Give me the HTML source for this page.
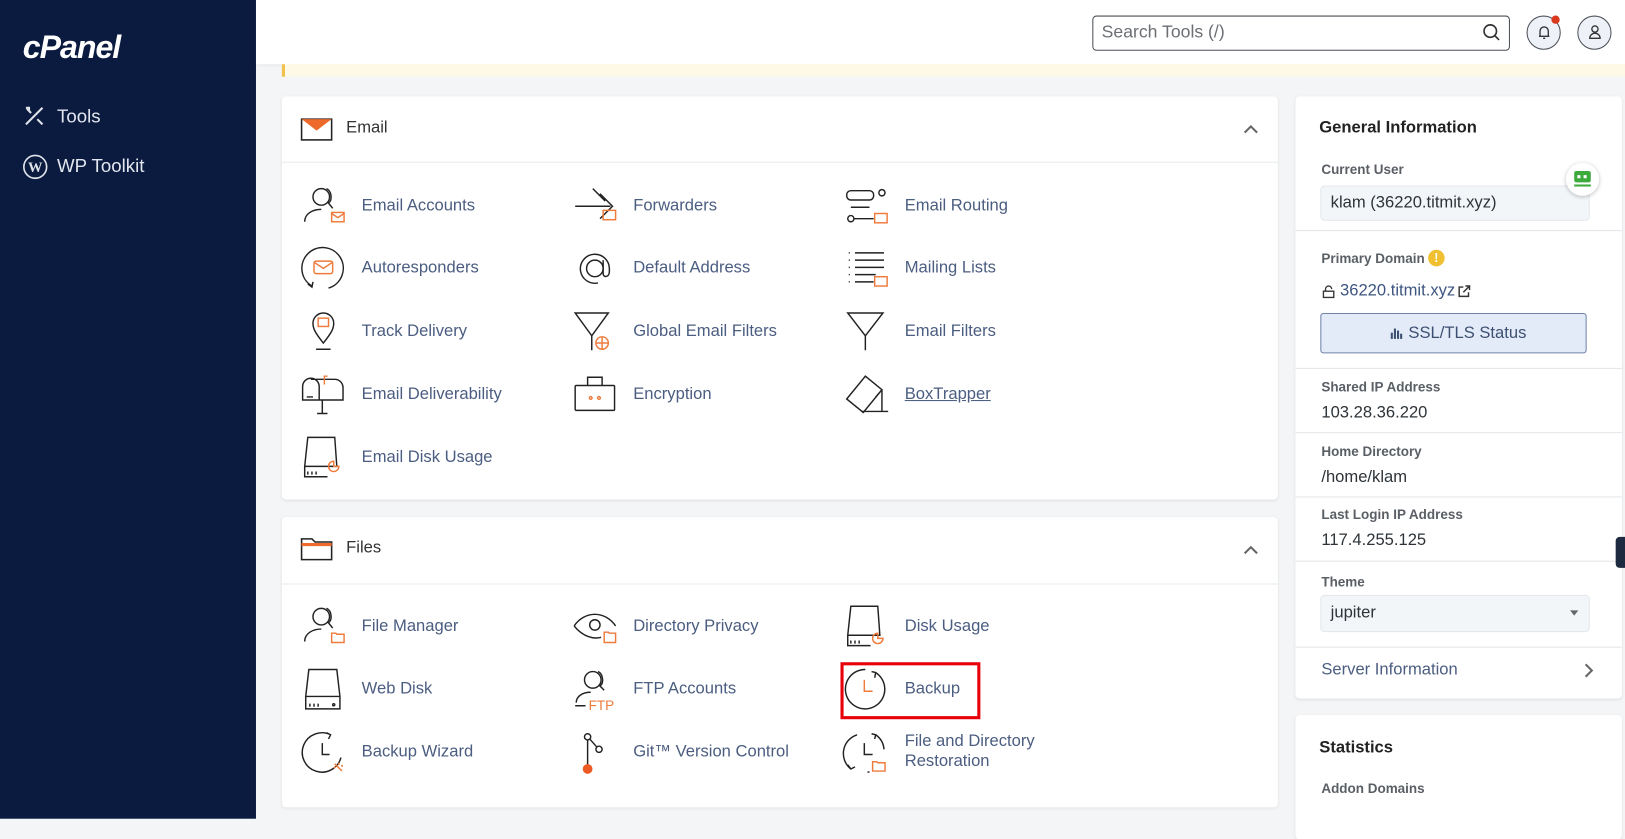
<!DOCTYPE html>
<html><head><meta charset="utf-8"><style>
*{margin:0;padding:0;box-sizing:border-box}
html,body{width:1625px;height:801px;overflow:hidden;background:#f4f5f7}
#wrap{position:absolute;left:0;top:0;width:1568px;height:773px;transform:scale(1.03635);transform-origin:0 0;font-family:"Liberation Sans",sans-serif}
.abs{position:absolute}
#side{left:0;top:0;width:247px;height:790px;background:#0b1b3f}
#hdr{left:247px;top:0;width:1330px;height:62px;background:#fff;box-shadow:0 1px 3px rgba(0,0,0,.06)}
.card{position:absolute;background:#fff;border-radius:4px;box-shadow:0 1px 3px rgba(0,0,0,.08)}
.it{position:absolute;font-size:16px;color:#4b5d80;line-height:19px}
.ic{position:absolute;width:42px;height:42px}
.lbl{position:absolute;left:1275px;font-size:13px;font-weight:bold;color:#5a5f66}
.val{position:absolute;left:1275px;font-size:16px;color:#2d3338}
.div{position:absolute;left:1250px;width:315px;height:1px;background:#e3e5e8}
svg{overflow:visible}
</style></head><body><div id="wrap">
<div id="side" class="abs">
 <div class="abs" style="left:22px;top:28px;font-size:31px;font-weight:bold;font-style:italic;color:#fff;letter-spacing:-1px">cPanel</div>
 <svg class="abs" style="left:22px;top:101px" width="22" height="22" viewBox="0 0 22 22" fill="none" stroke="#dfe3ea" stroke-width="2"><path d="M3 19L19 3M4 4l4 4M3 3l3 0 0 3M14 14l5 5"/></svg>
 <div class="abs" style="left:55px;top:102px;font-size:18px;color:#e2e6ee">Tools</div>
 <svg class="abs" style="left:22px;top:149px" width="24" height="24" viewBox="0 0 24 24"><circle cx="12" cy="12" r="11" fill="none" stroke="#dfe3ea" stroke-width="1.6"/><text x="12" y="17" text-anchor="middle" font-size="14" font-weight="bold" fill="#dfe3ea" font-family="Liberation Serif">W</text></svg>
 <div class="abs" style="left:55px;top:150px;font-size:18px;color:#e2e6ee">WP Toolkit</div>
</div>
<div id="hdr" class="abs"></div>
<div class="abs" style="left:1054px;top:15px;width:403px;height:34px;border:1px solid #4a4f56;border-radius:4px;background:#fff"></div>
<div class="abs" style="left:1063px;top:21px;font-size:17px;color:#6b6f74">Search Tools (/)</div>
<svg class="abs" style="left:1430px;top:22px" width="18" height="18" viewBox="0 0 18 18" fill="none" stroke="#333" stroke-width="1.6"><circle cx="8" cy="8" r="6"/><path d="M12.5 12.5l4 4"/></svg>
<div class="abs" style="left:1473px;top:15px;width:33px;height:33px;border:1px solid #4a4f56;border-radius:50%;background:#eef1f8"></div>
<svg class="abs" style="left:1482px;top:23px" width="16" height="16" viewBox="0 0 16 16" fill="none" stroke="#333" stroke-width="1.3"><path d="M4 12V7a4 4 0 0 1 8 0v5zM3 12h10M7 14h2"/></svg>
<div class="abs" style="left:1497px;top:15px;width:8px;height:8px;border-radius:50%;background:#d9381e"></div>
<div class="abs" style="left:1522px;top:15px;width:33px;height:33px;border:1px solid #4a4f56;border-radius:50%;background:#eef1f8"></div>
<svg class="abs" style="left:1531px;top:23px" width="16" height="16" viewBox="0 0 16 16" fill="none" stroke="#333" stroke-width="1.3"><circle cx="8" cy="5" r="3"/><path d="M3 14a5 5 0 0 1 10 0z"/></svg>
<div class="abs" style="left:272px;top:62px;width:1296px;height:12px;background:#fdf9e6"></div>
<div class="abs" style="left:272px;top:62px;width:3px;height:12px;background:#f0c14b"></div>

<div class="card" style="left:272px;top:93px;width:961px;height:389px"></div>
<div class="abs" style="left:272px;top:156px;width:961px;height:1px;background:#e8eaec"></div>
<svg class="abs" style="left:290px;top:114px" width="31" height="22" viewBox="0 0 31 22"><rect x="1" y="1" width="29" height="20" fill="#fff" stroke="#222" stroke-width="1.5"/><path d="M1 1h29L15.5 12z" fill="#ee6a2c"/></svg>
<div class="abs" style="left:334px;top:115px;font-size:16px;color:#333">Email</div>
<svg class="abs" style="left:1200px;top:120px" width="14" height="10" viewBox="0 0 14 10" fill="none" stroke="#666" stroke-width="2"><path d="M1 8l6-6 6 6"/></svg>

<div class="card" style="left:272px;top:499px;width:961px;height:280px"></div>
<div class="abs" style="left:272px;top:563px;width:961px;height:1px;background:#e8eaec"></div>
<svg class="abs" style="left:290px;top:519px" width="31" height="22" viewBox="0 0 31 22"><path d="M1 1h10l3 3h16v17H1z" fill="#fff" stroke="#222" stroke-width="1.5"/><path d="M1 5h29v3H1z" fill="#ee6a2c"/></svg>
<div class="abs" style="left:334px;top:520px;font-size:16px;color:#333">Files</div>
<svg class="abs" style="left:1200px;top:526px" width="14" height="10" viewBox="0 0 14 10" fill="none" stroke="#666" stroke-width="2"><path d="M1 8l6-6 6 6"/></svg>

<svg class="ic" style="left:291px;top:178px" viewBox="0 0 42 42" fill="none" stroke="#222" stroke-width="1.4"><circle cx="19" cy="12" r="8"/><path d="M3 36c0-8 8-12 16-12M24 4c5 2 6 11 2 14l4 5"/><rect x="29" y="27" width="12" height="9" stroke="#ee7a3c"/><path d="M29 28l6 4 6-4" stroke="#ee7a3c"/></svg>
<div class="it" style="left:349px;top:189px">Email Accounts</div>
<svg class="ic" style="left:553px;top:178px" viewBox="0 0 42 42" fill="none" stroke="#222" stroke-width="1.4"><path d="M2 21h34M26 9l12 12-12 12M19 4l12 12"/><rect x="29" y="25" width="12" height="9" stroke="#ee7a3c"/></svg>
<div class="it" style="left:611px;top:189px">Forwarders</div>
<svg class="ic" style="left:815px;top:178px" viewBox="0 0 42 42" fill="none" stroke="#222" stroke-width="1.4"><rect x="2" y="6" width="26" height="9" rx="4"/><circle cx="36" cy="8" r="3"/><circle cx="6" cy="33" r="3"/><path d="M9 33h19M6 22h18"/><rect x="29" y="28" width="12" height="9" stroke="#ee7a3c"/></svg>
<div class="it" style="left:873px;top:189px">Email Routing</div>
<svg class="ic" style="left:291px;top:238px" viewBox="0 0 42 42" fill="none" stroke="#222" stroke-width="1.4"><path d="M10 38A20 20 0 1 1 26 40M6 36l4 3 1-5"/><rect x="12" y="14" width="18" height="12" rx="2" stroke="#ee7a3c"/><path d="M12 15l9 6 9-6" stroke="#ee7a3c"/></svg>
<div class="it" style="left:349px;top:249px">Autoresponders</div>
<svg class="ic" style="left:553px;top:238px" viewBox="0 0 42 42" fill="none" stroke="#222" stroke-width="1.4"><circle cx="21" cy="21" r="8"/><path d="M29 13v13c0 4 6 4 6-2V21A14 14 0 1 0 24 35"/></svg>
<div class="it" style="left:611px;top:249px">Default Address</div>
<svg class="ic" style="left:815px;top:238px" viewBox="0 0 42 42" fill="none" stroke="#222" stroke-width="1.4"><path d="M4 6h1M10 6h28M4 13h1M10 13h28M4 20h1M10 20h28M4 27h1M10 27h20M4 34h1M10 34h18"/><rect x="29" y="29" width="12" height="9" stroke="#ee7a3c"/></svg>
<div class="it" style="left:873px;top:249px">Mailing Lists</div>
<svg class="ic" style="left:291px;top:299px" viewBox="0 0 42 42" fill="none" stroke="#222" stroke-width="1.4"><path d="M21 32C13 22 11 18 11 13a10 10 0 0 1 20 0c0 5-2 9-10 19zM14 38h14"/><rect x="16" y="8" width="10" height="8" stroke="#ee7a3c"/></svg>
<div class="it" style="left:349px;top:310px">Track Delivery</div>
<svg class="ic" style="left:553px;top:299px" viewBox="0 0 42 42" fill="none" stroke="#222" stroke-width="1.4"><path d="M2 3h32L18 25zM18 25v14"/><circle cx="28" cy="32" r="6" stroke="#ee7a3c"/><path d="M22 32h12M28 26v12" stroke="#ee7a3c"/></svg>
<div class="it" style="left:611px;top:310px">Global Email Filters</div>
<svg class="ic" style="left:815px;top:299px" viewBox="0 0 42 42" fill="none" stroke="#222" stroke-width="1.4"><path d="M3 3h34L20 25zM20 25v14"/></svg>
<div class="it" style="left:873px;top:310px">Email Filters</div>
<svg class="ic" style="left:291px;top:359px" viewBox="0 0 42 42" fill="none" stroke="#222" stroke-width="1.4"><path d="M1 27V14a8 8 0 0 1 16 0v13zM9 7h23a8 8 0 0 1 8 8v12H17M20 27v13M15 40h10M5 24h6"/><path d="M22 12V4h3" stroke="#ee7a3c"/></svg>
<div class="it" style="left:349px;top:371px">Email Deliverability</div>
<svg class="ic" style="left:553px;top:359px" viewBox="0 0 42 42" fill="none" stroke="#222" stroke-width="1.4"><rect x="2" y="13" width="38" height="24" rx="1"/><path d="M14 13V5h14v8"/><circle cx="17" cy="25" r="1.3" stroke="#ee7a3c"/><circle cx="25" cy="25" r="1.3" stroke="#ee7a3c"/></svg>
<div class="it" style="left:611px;top:371px">Encryption</div>
<svg class="ic" style="left:815px;top:359px" viewBox="0 0 42 42" fill="none" stroke="#222" stroke-width="1.4"><path d="M2 26L20 4l16 13-18 22zM36 17v21M16 38h26M30 24l6-7"/></svg>
<div class="it" style="left:873px;top:371px;text-decoration:underline">BoxTrapper</div>
<svg class="ic" style="left:291px;top:420px" viewBox="0 0 42 42" fill="none" stroke="#222" stroke-width="1.4"><path d="M6 2h26l2 28H3zM3 30v10h22M6 35v3M10 35v3M14 35v3"/><path d="M36 30a5 5 0 1 1-5-5v5z" stroke="#ee7a3c"/></svg>
<div class="it" style="left:349px;top:432px">Email Disk Usage</div>

<svg class="ic" style="left:291px;top:583px" viewBox="0 0 42 42" fill="none" stroke="#222" stroke-width="1.4"><circle cx="19" cy="12" r="8"/><path d="M3 36c0-8 8-12 16-12M24 4c5 2 6 11 2 14l4 5"/><path d="M29 28h4l1 1h7v8H29z" stroke="#ee7a3c"/></svg>
<div class="it" style="left:349px;top:595px">File Manager</div>
<svg class="ic" style="left:553px;top:583px" viewBox="0 0 42 42" fill="none" stroke="#222" stroke-width="1.4"><path d="M1 21C11 6 31 6 41 21M1 21c8 10 18 13 26 11"/><circle cx="21" cy="20" r="5"/><path d="M30 27h4l1 1h6v9H30z" stroke="#ee7a3c"/></svg>
<div class="it" style="left:611px;top:595px">Directory Privacy</div>
<svg class="ic" style="left:815px;top:583px" viewBox="0 0 42 42" fill="none" stroke="#222" stroke-width="1.4"><path d="M6 2h26l2 28H3zM3 30v10h22M6 35v3M10 35v3M14 35v3"/><path d="M37 33a5 5 0 1 1-5-5v5z" stroke="#ee7a3c"/></svg>
<div class="it" style="left:873px;top:595px">Disk Usage</div>
<svg class="ic" style="left:291px;top:644px" viewBox="0 0 42 42" fill="none" stroke="#222" stroke-width="1.4"><path d="M7 2h27l3 26H4zM4 28v12h33V28M8 35v3M12 35v3M16 35v3"/><circle cx="31" cy="36" r="1"/></svg>
<div class="it" style="left:349px;top:655px">Web Disk</div>
<svg class="ic" style="left:553px;top:644px" viewBox="0 0 42 42" fill="none" stroke="#222" stroke-width="1.4"><circle cx="19" cy="12" r="8"/><path d="M3 34c0-6 6-10 14-10M24 4c5 2 6 11 2 14l4 4M2 37h10"/><text x="15" y="41" font-size="13" fill="#ee7a3c" stroke="none" font-family="Liberation Sans">FTP</text></svg>
<div class="it" style="left:611px;top:655px">FTP Accounts</div>
<div class="abs" style="left:811px;top:639px;width:135px;height:55px;border:3px solid #e8000b"></div>
<svg class="ic" style="left:815px;top:644px" viewBox="0 0 42 42" fill="none" stroke="#222" stroke-width="1.4"><path d="M30 5A19 19 0 1 1 20 2M26 4l4 1-1 5"/><path d="M19 12v11h8" stroke="#ee7a3c"/></svg>
<div class="it" style="left:873px;top:655px">Backup</div>
<svg class="ic" style="left:291px;top:705px" viewBox="0 0 42 42" fill="none" stroke="#222" stroke-width="1.4"><path d="M28 4A19 19 0 1 0 38 26M24 2l4 2-2 4"/><path d="M20 12v11h7"/><path d="M32 32l7 7M36 31v2M40 34h-2M31 36l2-1" stroke="#ee7a3c"/></svg>
<div class="it" style="left:349px;top:716px">Backup Wizard</div>
<svg class="ic" style="left:553px;top:705px" viewBox="0 0 42 42" fill="none" stroke="#222" stroke-width="1.4"><circle cx="14" cy="6" r="3"/><circle cx="25" cy="18" r="3"/><path d="M14 9v25M16 8l7 8"/><circle cx="14" cy="37" r="4" fill="#ee5a24" stroke="#ee5a24"/></svg>
<div class="it" style="left:611px;top:716px">Git™ Version Control</div>
<svg class="ic" style="left:815px;top:705px" viewBox="0 0 42 42" fill="none" stroke="#222" stroke-width="1.4"><path d="M12 4A19 19 0 0 0 6 37M3 33l3 4 4-2M30 4a19 19 0 0 1 8 14M26 3l4 1-1 4M22 40h2"/><path d="M19 12v11h8"/><path d="M27 30h4l1 1h7v8H27z" stroke="#ee7a3c"/></svg>
<div class="it" style="left:873px;top:706px">File and Directory<br>Restoration</div>

<div class="card" style="left:1250px;top:93px;width:315px;height:581px"></div>
<div class="abs" style="left:1273px;top:115px;font-size:16px;font-weight:bold;color:#222">General Information</div>
<div class="lbl" style="top:156px">Current User</div>
<div class="abs" style="left:1274px;top:179px;width:260px;height:34px;background:#f3f6f9;border:1px solid #e3e7ec;border-radius:4px"></div>
<div class="abs" style="left:1284px;top:187px;font-size:16px;color:#2d3338">klam (36220.titmit.xyz)</div>
<div class="abs" style="left:1511px;top:157px;width:32px;height:32px;border-radius:50%;background:#fff;box-shadow:0 1px 4px rgba(0,0,0,.25)"></div>
<div class="abs" style="left:1519px;top:165px;width:16px;height:11px;background:#3cab3c;border-radius:2px"></div>
<div class="abs" style="left:1522px;top:169px;width:3px;height:3px;background:#fff"></div><div class="abs" style="left:1528px;top:169px;width:3px;height:3px;background:#fff"></div>
<div class="abs" style="left:1519px;top:178px;width:16px;height:2px;background:#3cab3c"></div>
<div class="div" style="top:222px"></div>
<div class="lbl" style="top:242px">Primary Domain</div>
<div class="abs" style="left:1378px;top:241px;width:16px;height:16px;border-radius:50%;background:#f0c030;color:#fff;font-size:12px;font-weight:bold;text-align:center;line-height:16px">!</div>
<svg class="abs" style="left:1276px;top:275px" width="12" height="13" viewBox="0 0 12 13" fill="none" stroke="#333" stroke-width="1.3"><rect x="1" y="6" width="10" height="6"/><path d="M3 6V4a3 3 0 0 1 6 0"/></svg>
<div class="abs" style="left:1293px;top:272px;font-size:16px;color:#3d5580">36220.titmit.xyz</div>
<svg class="abs" style="left:1406px;top:275px" width="13" height="13" viewBox="0 0 13 13" fill="none" stroke="#333" stroke-width="1.4"><path d="M6 2H2v9h9V7M8 1h4v4M12 1L6 7"/></svg>
<div class="abs" style="left:1274px;top:302px;width:257px;height:39px;background:#e3ebf9;border:1px solid #7084a6;border-radius:3px"></div>
<svg class="abs" style="left:1342px;top:315px" width="12" height="12" viewBox="0 0 12 12" fill="#3d4f70"><rect x="0" y="6" width="2" height="6"/><rect x="3" y="2" width="2" height="10"/><rect x="6" y="4" width="2" height="8"/><rect x="9" y="7" width="2" height="5"/></svg>
<div class="abs" style="left:1359px;top:313px;font-size:16px;color:#3d4f70">SSL/TLS Status</div>
<div class="div" style="top:355px"></div>
<div class="lbl" style="top:366px">Shared IP Address</div>
<div class="val" style="top:390px">103.28.36.220</div>
<div class="div" style="top:417px"></div>
<div class="lbl" style="top:428px">Home Directory</div>
<div class="val" style="top:452px">/home/klam</div>
<div class="div" style="top:479px"></div>
<div class="lbl" style="top:489px">Last Login IP Address</div>
<div class="val" style="top:513px">117.4.255.125</div>
<div class="div" style="top:541px"></div>
<div class="abs" style="left:1559px;top:518px;width:9px;height:30px;background:#1d2a3f;border-radius:4px 0 0 4px"></div>
<div class="lbl" style="top:554px">Theme</div>
<div class="abs" style="left:1274px;top:574px;width:260px;height:36px;background:#f3f6f9;border:1px solid #e3e7ec;border-radius:4px"></div>
<div class="abs" style="left:1284px;top:583px;font-size:16px;color:#2d3338">jupiter</div>
<div class="abs" style="left:1515px;top:589px;width:0;height:0;border-left:4px solid transparent;border-right:4px solid transparent;border-top:5px solid #666"></div>
<div class="div" style="top:624px"></div>
<div class="abs" style="left:1275px;top:638px;font-size:16px;color:#4b5d80">Server Information</div>
<svg class="abs" style="left:1529px;top:640px" width="9" height="14" viewBox="0 0 9 14" fill="none" stroke="#666" stroke-width="2"><path d="M1 1l6 6-6 6"/></svg>
<div class="card" style="left:1250px;top:690px;width:315px;height:120px"></div>
<div class="abs" style="left:1273px;top:713px;font-size:16px;font-weight:bold;color:#222">Statistics</div>
<div class="lbl" style="top:753px">Addon Domains</div>
</div></body></html>
